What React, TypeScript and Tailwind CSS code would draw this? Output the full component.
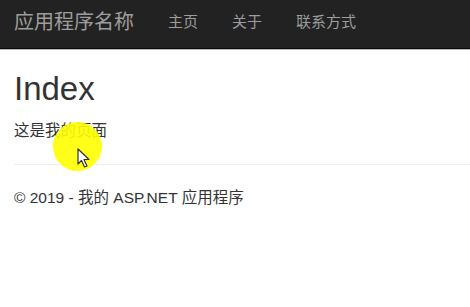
import React from "react";

const font = { fontFamily: '"Liberation Sans", "Noto Sans CJK SC", sans-serif' };

export default function App() {
  return (
    <div className="relative min-h-[307px] bg-white text-[#333] text-[15.5px] leading-5" style={font}>
      <nav className="h-[49px] bg-[#222] border-b border-[#080808] shadow-[0_1px_0_#bbb] flex items-center px-[14px] pb-[4px]">
        <a className="text-[20px] text-[#9d9d9d]">应用程序名称</a>
        <ul className="flex ml-[34px] gap-[34px] text-[15px] text-[#9d9d9d]">
          <li>主页</li>
          <li>关于</li>
          <li>联系方式</li>
        </ul>
      </nav>

      <div className="px-[14px]">
        <h2 className="mt-[22px] mb-[14px] text-[33px] leading-9 font-normal">Index</h2>
        <p className="mb-[10px]">这是我的页面</p>
        <hr className="mt-[23px] mb-[23px] border-t border-[#eee] -mr-[14px]" />
        <footer>
          <p>© 2019 - 我的 ASP.NET 应用程序</p>
        </footer>
      </div>

      {/* cursor highlight from the screen recording */}
      <div className="absolute left-[53px] top-[122px] w-[49px] h-[49px] rounded-full bg-[#ffff00] opacity-90" />
      <svg className="absolute left-[77px] top-[148px]" width="14" height="21" viewBox="0 0 14 21">
        <path d="M1 1 L1 16 L4.5 12.5 L7.5 19 L10 18 L7 11.5 L12 11.5 Z" fill="#fff" stroke="#333" strokeWidth="1.2" strokeLinejoin="round" />
      </svg>
    </div>
  );
}
